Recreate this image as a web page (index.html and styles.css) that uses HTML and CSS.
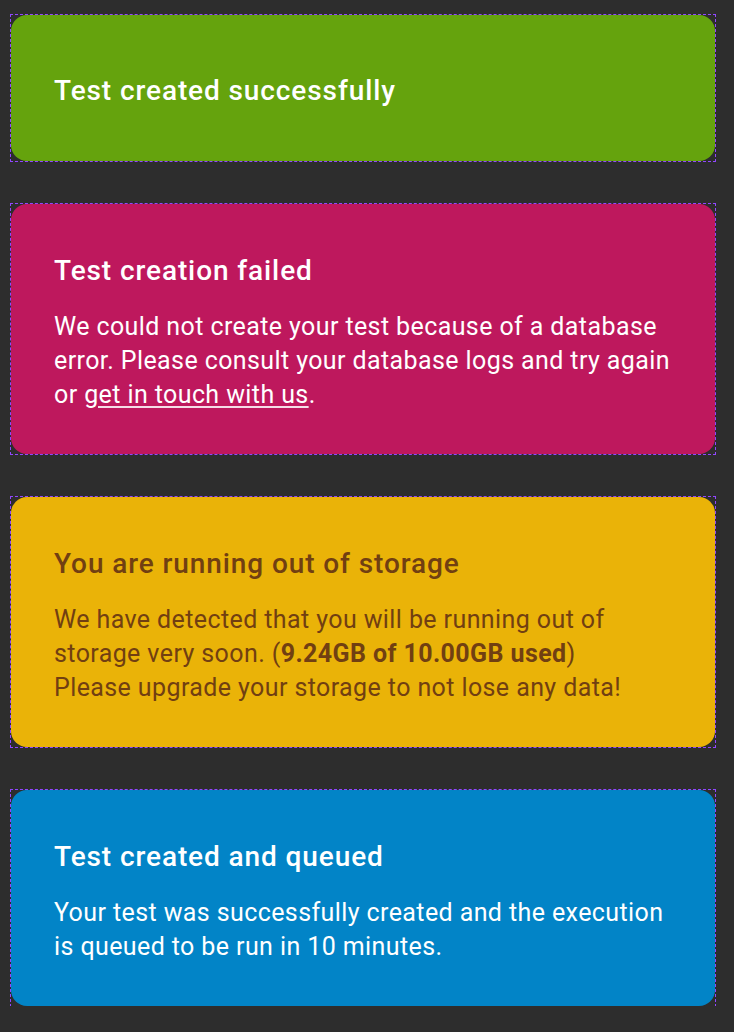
FILE: index.html
```html
<!DOCTYPE html>
<html lang="en">

<head>
    <meta charset="UTF-8">
    <title>Alerts</title>
    <link rel="stylesheet" href="styles.css">
</head>

<body>

    <div class="alert-list">
        <div class="alert-frame">
            <div class="alert alert-success alert-compact">
                <h3 class="alert-title">Test created successfully</h3>
            </div>
        </div>

        <div class="alert-frame">
            <div class="alert alert-danger">
                <h3 class="alert-title">Test creation failed</h3>
                <p class="alert-text">We could not create your test because of a database error. Please consult your database logs and try again or <a href="#">get in touch with us</a>.</p>
            </div>
        </div>

        <div class="alert-frame">
            <div class="alert alert-warning">
                <h3 class="alert-title">You are running out of storage</h3>
                <p class="alert-text">We have detected that you will be running out of storage very soon. (<strong>9.24GB of 10.00GB used</strong>)<br>Please upgrade your storage to not lose any data!</p>
            </div>
        </div>

        <div class="alert-frame">
            <div class="alert alert-info">
                <h3 class="alert-title">Test created and queued</h3>
                <p class="alert-text">Your test was successfully created and the execution is queued to be run in 10 minutes.</p>
            </div>
        </div>
    </div>

</body>

</html>
```

FILE: styles.css
```css
* {
    box-sizing: border-box;
}

body {
    font-family: Roboto, 'Noto Sans', sans-serif;
    background: #2d2d2d;
    margin: 0;
    padding: 15px 0 0 11px;
}

.alert-list {
    width: 704px;
    display: flex;
    flex-direction: column;
    gap: 43px;
}

.alert-frame {
    outline: 1px dashed #9147ff;
}

.alert {
    padding: 46px 43px 42px;
    border-radius: 16px;
    color: #fff;
}

.alert-compact {
    min-height: 146px;
    padding-top: 55px;
}

.alert-title {
    margin: 0;
    font-size: 28px;
    font-weight: 500;
    line-height: 42px;
    letter-spacing: 0.9px;
}

.alert-text {
    margin: 18px 0 0;
    font-size: 25px;
    line-height: 34px;
    letter-spacing: 0.4px;
}

.alert-text a {
    color: inherit;
    text-decoration: underline;
    text-decoration-color: rgba(255, 255, 255, 0.85);
    text-underline-offset: 3px;
}

.alert-text strong {
    font-weight: 700;
}

.alert-success {
    background: #65a30d;
}

.alert-danger {
    background: #be185d;
}

.alert-warning {
    background: #eab308;
    color: #713f12;
}

.alert-info {
    background: #0284c7;
}
```
